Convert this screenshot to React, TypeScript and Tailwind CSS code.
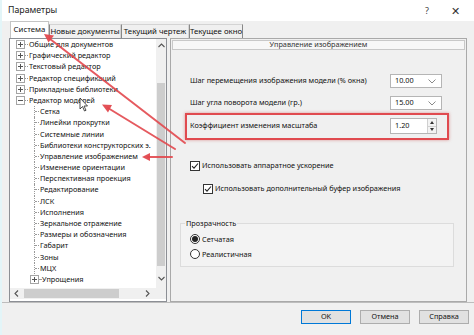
import React from "react";

const FONT = { fontFamily: '"Noto Sans", "Open Sans", sans-serif' };

function Expander({ minus }: { minus?: boolean }) {
  return (
    <span className="relative inline-block w-[9px] h-[9px] shrink-0 border border-[#a5a5a5] bg-white">
      <span className="absolute left-[1px] right-[1px] top-[3px] h-px bg-[#555]" />
      {!minus && <span className="absolute top-[1px] bottom-[1px] left-[3px] w-px bg-[#555]" />}
    </span>
  );
}

const top = ["Общие для документов", "Графический редактор", "Текстовый редактор", "Редактор спецификаций", "Прикладные библиотеки"];
const kids = [
  "Сетка",
  "Линейки прокрутки",
  "Системные линии",
  "Библиотеки конструкторских э.",
  "Управление изображением",
  "Изменение ориентации",
  "Перспективная проекция",
  "Редактирование",
  "ЛСК",
  "Исполнения",
  "Зеркальное отражение",
  "Размеры и обозначения",
  "Габарит",
  "Зоны",
  "МЦХ",
];

function TopRow({ label, minus }: { label: string; minus?: boolean }) {
  return (
    <div className="flex items-center h-[11.2px] pl-[6px] whitespace-nowrap">
      <Expander minus={minus} />
      <span className="w-[3px] h-0 border-t border-dotted border-[#999]" />
      <span className="pl-[1px]">{label}</span>
    </div>
  );
}

function KidRow({ label }: { label: string }) {
  return (
    <div className="flex items-stretch h-[11.2px] pl-[24px] whitespace-nowrap">
      <span className="w-[5px] border-l border-dotted border-[#999]">
        <span className="block mt-[5px] w-[4px] h-0 border-t border-dotted border-[#999]" />
      </span>
      <span className="pl-[1px] leading-[11.2px]">{label}</span>
    </div>
  );
}

function Chevron() {
  return (
    <svg width="8" height="5" viewBox="0 0 8 5" className="shrink-0">
      <path d="M0.5 0.5 L4 4 L7.5 0.5" fill="none" stroke="#8a8a8a" strokeWidth="1" />
    </svg>
  );
}

function Select({ value }: { value: string }) {
  return (
    <div className="w-[52px] h-[14px] bg-white border border-[#b5b5b5] flex items-center justify-between pl-[4px] pr-[5px]">
      <span>{value}</span>
      <Chevron />
    </div>
  );
}

function Check() {
  return (
    <span className="inline-flex w-[10px] h-[10px] shrink-0 border border-[#333] bg-white items-center justify-center">
      <svg width="8" height="8" viewBox="0 0 8 8">
        <path d="M1 4.2 L3 6.2 L7 1.5" fill="none" stroke="#222" strokeWidth="1.1" />
      </svg>
    </span>
  );
}

function Radio({ on }: { on?: boolean }) {
  return (
    <span className="inline-flex w-[10px] h-[10px] shrink-0 rounded-full border border-[#333] bg-white items-center justify-center">
      {on && <span className="w-[6px] h-[6px] rounded-full bg-[#222]" />}
    </span>
  );
}

function Btn({ label, def }: { label: string; def?: boolean }) {
  return (
    <div
      className={
        "w-[50px] h-[14px] flex items-center justify-center bg-[#e1e1e1] border " +
        (def ? "border-[#0078d7]" : "border-[#adadad]")
      }
    >
      {label}
    </div>
  );
}

export default function App() {
  return (
    <div style={FONT} className="relative w-[474px] h-[335px] overflow-hidden bg-[#f0f0f0] text-[#111] text-[7.3px] leading-none border-l-2 border-[#e3f5f8]">
      {/* title bar */}
      <div className="h-[21px] bg-white flex items-center pl-[6px] pr-[14px] text-[8.8px] text-[#222]">
        <span>Параметры</span>
        <span className="ml-auto text-[9px] text-[#444]">?</span>
        <span className="ml-[22px] text-[11px] font-light text-[#333]">✕</span>
      </div>

      {/* tabs */}
      <div className="flex items-end h-[17px] pl-[8px] text-[7.8px] whitespace-nowrap">
        <div className="w-[39px] h-[17px] flex items-center justify-center bg-white border border-b-0 border-[#c4c4c4]">Система</div>
        <div className="w-[72px] h-[14px] flex items-center justify-center border border-b-0 border-l-[#888] border-[#d4d4d4]">Новые документы</div>
        <div className="w-[68px] h-[14px] flex items-center justify-center border border-b-0 border-l-[#888] border-[#d4d4d4]">Текущий чертеж</div>
        <div className="w-[54px] h-[14px] flex items-center justify-center border border-b-0 border-l-[#888] border-r-[#888] border-[#d4d4d4]">Текущее окно</div>
      </div>

      {/* content */}
      <div className="flex h-[265px] pl-[7px] gap-[3px] border-b border-[#bdbdbd]">
        {/* tree */}
        <div className="w-[158px] h-[264px] border border-[#8c8f95] bg-white flex flex-col">
          <div className="flex flex-1 min-h-0">
            <div className="flex-1 overflow-hidden">
              {top.map((t) => (
                <TopRow key={t} label={t} />
              ))}
              <TopRow label="Редактор моделей" minus />
              {kids.map((k) => (
                <KidRow key={k} label={k} />
              ))}
              <div className="flex items-center h-[11.2px] pl-[20px] whitespace-nowrap">
                <Expander />
                <span className="w-[2px] h-0 border-t border-dotted border-[#999]" />
                <span className="pl-[1px]">Упрощения</span>
              </div>
            </div>
            <div className="w-[10px] bg-[#f0f0f0] flex flex-col items-center">
              <svg width="7" height="5" viewBox="0 0 7 5" className="mt-[4px]">
                <path d="M0.5 4 L3.5 1 L6.5 4" fill="none" stroke="#555" strokeWidth="1.1" />
              </svg>
              <div className="w-[8px] h-[183px] mt-[35px] bg-[#cdcdcd]" />
              <svg width="7" height="5" viewBox="0 0 7 5" className="mt-[10px]">
                <path d="M0.5 1 L3.5 4 L6.5 1" fill="none" stroke="#555" strokeWidth="1.1" />
              </svg>
            </div>
          </div>
          <div className="h-[11px] flex bg-[#f0f0f0] mb-[2px]">
            <div className="flex-1 flex items-center">
              <svg width="5" height="7" viewBox="0 0 5 7" className="ml-[4px]">
                <path d="M4 0.5 L1 3.5 L4 6.5" fill="none" stroke="#555" strokeWidth="1.1" />
              </svg>
              <div className="ml-[5px] w-[95px] h-[9px] bg-[#cdcdcd]" />
              <svg width="5" height="7" viewBox="0 0 5 7" className="ml-auto mr-[6px]">
                <path d="M1 0.5 L4 3.5 L1 6.5" fill="none" stroke="#555" strokeWidth="1.1" />
              </svg>
            </div>
            <div className="w-[10px] bg-[#f0f0f0]" />
          </div>
        </div>

        {/* right panel */}
        <div className="w-[297px] h-[264px] border border-[#a9a9a9] flex flex-col">
          <div className="mt-[1px] mx-[1px] h-[10px] bg-[#f7f7f7] border border-[#c8c8c8] flex items-center justify-center text-[#333]">
            Управление изображением
          </div>

          <div className="mt-[24px] flex items-center pl-[19px]">
            <span className="w-[200px]">Шаг перемещения изображения модели (% окна)</span>
            <Select value="10.00" />
          </div>
          <div className="mt-[8px] flex items-center pl-[19px]">
            <span className="w-[200px]">Шаг угла поворота модели (гр.)</span>
            <Select value="15.00" />
          </div>
          <div className="mt-[8px] flex items-center pl-[19px]">
            <span className="w-[200px]">Коэффициент изменения масштаба</span>
            <div className="w-[47px] h-[16px] bg-white border border-[#b5b5b5] flex items-center justify-between pl-[4px]">
              <span>1.20</span>
              <div className="w-[9px] h-full flex flex-col border-l border-[#d0d0d0] bg-[#f3f3f3]">
                <div className="flex-1 flex items-center justify-center border-b border-[#d0d0d0]">
                  <span className="w-0 h-0 border-l-[2.5px] border-r-[2.5px] border-b-[3px] border-l-transparent border-r-transparent border-b-[#333]" />
                </div>
                <div className="flex-1 flex items-center justify-center">
                  <span className="w-0 h-0 border-l-[2.5px] border-r-[2.5px] border-t-[3px] border-l-transparent border-r-transparent border-t-[#333]" />
                </div>
              </div>
            </div>
          </div>

          <div className="mt-[27px] flex items-center pl-[19px] gap-[2px]">
            <Check />
            <span>Использовать аппаратное ускорение</span>
          </div>
          <div className="mt-[13px] flex items-center pl-[32px] gap-[2px]">
            <Check />
            <span>Использовать дополнительный буфер изображения</span>
          </div>

          <fieldset className="mt-[26px] ml-[9px] w-[274px] h-[47px] border border-[#dcdcdc] bg-[#f3f3f3] pl-[9px]">
            <legend className="px-[1px] ml-[-5px]">Прозрачность</legend>
            <div className="mt-[7px] flex items-center gap-[2px]">
              <Radio on />
              <span>Сетчатая</span>
            </div>
            <div className="mt-[5px] flex items-center gap-[2px]">
              <Radio />
              <span>Реалистичная</span>
            </div>
          </fieldset>
        </div>
      </div>

      {/* buttons */}
      <div className="flex justify-end gap-[9px] pr-[5px] mt-[7px]">
        <Btn label="OK" def />
        <Btn label="Отмена" />
        <Btn label="Справка" />
      </div>

      {/* annotation: red highlight box */}
      <div className="absolute left-[183px] top-[113px] w-[264px] h-[27px] border-2 border-[#e04a4f] shadow-[0_0_3px_rgba(200,60,60,0.5)] pointer-events-none" />

      {/* annotation arrows */}
      <svg className="absolute left-0 top-0 pointer-events-none" width="474" height="335" viewBox="0 0 474 335">
        <g stroke="#e2484e" strokeWidth="2" strokeOpacity="0.9" fill="none" strokeLinecap="round">
          <line x1="183" y1="143" x2="48" y2="39" />
          <line x1="173" y1="149" x2="106" y2="108" />
          <line x1="170" y1="157" x2="146" y2="157" />
        </g>
        <g fill="#e2484e" fillOpacity="0.95">
          <polygon points="42,34 52,35.5 46.5,42.5" />
          <polygon points="100,104.5 110,105 106,112.5" />
          <polygon points="140,157 148,153 148,161" />
        </g>
        <path d="M78 98 L78 109 L80.5 106.5 L82.5 111 L84 110.3 L82 106 L85.5 106 Z" fill="#fff" stroke="#222" strokeWidth="0.8" />
      </svg>
    </div>
  );
}
